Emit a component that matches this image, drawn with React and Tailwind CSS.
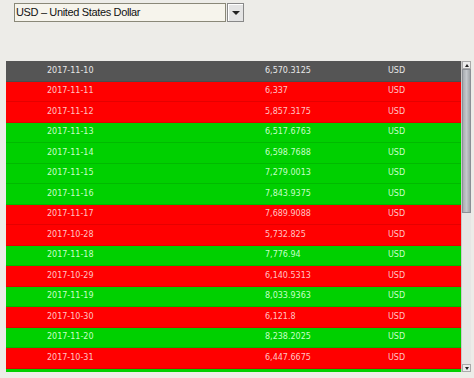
import React from "react";

const rows = [
  { d: "2017-11-10", v: "6,570.3125", c: "gray" },
  { d: "2017-11-11", v: "6,337", c: "red" },
  { d: "2017-11-12", v: "5,857.3175", c: "red" },
  { d: "2017-11-13", v: "6,517.6763", c: "green" },
  { d: "2017-11-14", v: "6,598.7688", c: "green" },
  { d: "2017-11-15", v: "7,279.0013", c: "green" },
  { d: "2017-11-16", v: "7,843.9375", c: "green" },
  { d: "2017-11-17", v: "7,689.9088", c: "red" },
  { d: "2017-10-28", v: "5,732.825", c: "red" },
  { d: "2017-11-18", v: "7,776.94", c: "green" },
  { d: "2017-10-29", v: "6,140.5313", c: "red" },
  { d: "2017-11-19", v: "8,033.9363", c: "green" },
  { d: "2017-10-30", v: "6,121.8", c: "red" },
  { d: "2017-11-20", v: "8,238.2025", c: "green" },
  { d: "2017-10-31", v: "6,447.6675", c: "red" },
];

const bg = {
  gray: "bg-[#555555] text-[#e8e8e8]",
  red: "bg-[#ff0000] text-[#ffc4c4]",
  green: "bg-[#00d000] text-[#c8ffc8]",
};

const App = () => {
  return (
    <div className="w-[474px] h-[378px] bg-[#edece8] overflow-hidden font-['DejaVu_Sans',sans-serif]">
      <div className="flex pt-[3px] pl-[14px] gap-[1px]">
        <div className="w-[212px] h-[19px] bg-[#f6f4ec] border border-[#8a8878] flex items-center pl-[1px] text-[11px] text-[#111] font-['Liberation_Sans',sans-serif] tracking-[-0.35px]">
          USD – United States Dollar
        </div>
        <div className="w-[17px] h-[19px] border border-[#888] bg-[#e4e4e4] flex items-center justify-center shadow-[inset_1px_1px_0_#fff]">
          <div className="w-0 h-0 border-l-[4px] border-r-[4px] border-t-[4px] border-l-transparent border-r-transparent border-t-[#222]" />
        </div>
      </div>

      <div className="flex mt-[39px] ml-[6px] w-[465px] h-[311px]">
        <div className="flex-1 overflow-hidden text-[8px] leading-none">
          {rows.map((r, i) => (
            <div
              key={i}
              className={`flex items-center h-[20.5px] border-b border-black/10 ${bg[r.c]}`}
            >
              <span className="w-[259px] pl-[41px]">{r.d}</span>
              <span className="w-[123px]">{r.v}</span>
              <span>USD</span>
            </div>
          ))}
          <div className="h-[4px] bg-[#00d000]" />
        </div>
        <div className="w-[10px] bg-[#e6e6e4] border-l border-[#c8c8c8] flex flex-col">
          <div className="h-[8px] bg-[#ececec] border border-[#aaa] flex items-center justify-center">
            <div className="w-0 h-0 border-l-[2px] border-r-[2px] border-b-[3px] border-l-transparent border-r-transparent border-b-[#222]" />
          </div>
          <div className="h-[144px] bg-gradient-to-r from-[#a8acb0] via-[#c4c8cc] to-[#a0a4a8] border border-[#8c9096]" />
          <div className="flex-1" />
          <div className="h-[8px] bg-[#ececec] border border-[#aaa] flex items-center justify-center">
            <div className="w-0 h-0 border-l-[2px] border-r-[2px] border-t-[3px] border-l-transparent border-r-transparent border-t-[#222]" />
          </div>
        </div>
      </div>
    </div>
  );
};

export default App;
